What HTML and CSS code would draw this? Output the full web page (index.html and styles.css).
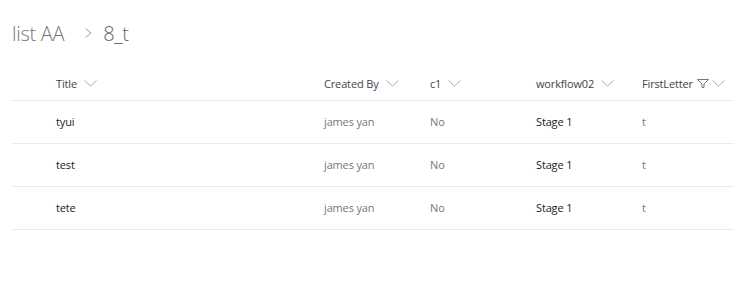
FILE: index.html
```html
<!DOCTYPE html>
<html>
<head>
<meta charset="utf-8">
<link rel="stylesheet" href="styles.css">
</head>
<body>
<div class="page">
  <div class="crumbs">
    <span class="crumb">list AA</span>
    <svg class="sep" viewBox="0 0 7 10"><path d="M0.5 0.5 L6 5 L0.5 9.5"/></svg>
    <span class="crumb current">8_t</span>
  </div>
  <div class="list">
    <div class="row head">
      <div class="cell">Title <svg class="chev" viewBox="0 0 13 7"><path d="M0.5 0.5 L6.5 6 L12.5 0.5"/></svg></div>
      <div class="cell">Created By <svg class="chev" viewBox="0 0 13 7"><path d="M0.5 0.5 L6.5 6 L12.5 0.5"/></svg></div>
      <div class="cell">c1 <svg class="chev" viewBox="0 0 13 7"><path d="M0.5 0.5 L6.5 6 L12.5 0.5"/></svg></div>
      <div class="cell">workflow02 <svg class="chev" viewBox="0 0 13 7"><path d="M0.5 0.5 L6.5 6 L12.5 0.5"/></svg></div>
      <div class="cell">FirstLetter <svg class="filter" viewBox="0 0 12 9"><path d="M0.5 0.5 H11.5 L7 5 V8.5 H5 V5 Z"/></svg><svg class="chev" viewBox="0 0 13 7"><path d="M0.5 0.5 L6.5 6 L12.5 0.5"/></svg></div>
    </div>
    <div class="row">
      <div class="cell dark">tyui</div>
      <div class="cell">james yan</div>
      <div class="cell">No</div>
      <div class="cell dark">Stage 1</div>
      <div class="cell">t</div>
    </div>
    <div class="row">
      <div class="cell dark">test</div>
      <div class="cell">james yan</div>
      <div class="cell">No</div>
      <div class="cell dark">Stage 1</div>
      <div class="cell">t</div>
    </div>
    <div class="row">
      <div class="cell dark">tete</div>
      <div class="cell">james yan</div>
      <div class="cell">No</div>
      <div class="cell dark">Stage 1</div>
      <div class="cell">t</div>
    </div>
  </div>
</div>
</body>
</html>
```
FILE: styles.css
```css
html, body {
  margin: 0;
  padding: 0;
  background: #fff;
}
body {
  font-family: "Segoe UI", "Open Sans", "Noto Sans", sans-serif;
  overflow: hidden;
}
.page {
  padding: 16px 0 0 12px;
}
.crumbs {
  display: flex;
  align-items: center;
  height: 34px;
  font-size: 20px;
  font-weight: 300;
  letter-spacing: -0.3px;
  color: #777;
}
.sep {
  width: 7px;
  height: 10px;
  margin: 0 11px 0 21px;
  fill: none;
  stroke: #999;
  stroke-width: 1;
}
.crumb.current {
  color: #666;
}
.list {
  margin-top: 17px;
}
.row {
  display: grid;
  grid-template-columns: 268px 106px 106px 106px auto;
  padding-left: 44px;
  padding-bottom: 2px;
  box-sizing: border-box;
  height: 43px;
  align-items: center;
  border-bottom: 1px solid #eaeaea;
  font-size: 11px;
  letter-spacing: -0.15px;
  color: #777;
  white-space: nowrap;
}
.row.head {
  height: 34px;
  padding-bottom: 0;
  color: #444;
}
.cell {
  display: flex;
  align-items: center;
}
.cell.dark {
  color: #222;
}
.chev {
  width: 13px;
  height: 7px;
  margin-left: 7px;
  fill: none;
  stroke: #aaa;
  stroke-width: 1;
}
.filter {
  width: 12px;
  height: 9px;
  margin-left: 4px;
  fill: none;
  stroke: #777;
  stroke-width: 1;
}
.filter + .chev {
  margin-left: 3px;
}
```
